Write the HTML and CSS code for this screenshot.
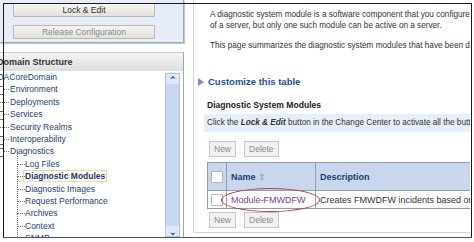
FILE: index.html
```html
<!DOCTYPE html>
<html>
  <head>
    <title>Diagnostic Modules</title>
    <link rel="stylesheet" href="styles.css">
  </head>
  <body>
    <div class="page">
      <div class="sidebar">
        <div class="change-center">
          <button type="button" class="cc-btn">Lock &amp; Edit</button>
          <button type="button" class="cc-btn disabled">Release Configuration</button>
        </div>
        <div class="domain">
          <div class="domain-head">Domain Structure</div>
          <div class="domain-body">
            <ul class="tree">
              <li class="root">OACoreDomain</li>
              <li class="lvl1"><span class="plus"></span>Environment</li>
              <li class="lvl1"><span class="leaf"></span>Deployments</li>
              <li class="lvl1"><span class="plus"></span>Services</li>
              <li class="lvl1"><span class="leaf"></span>Security Realms</li>
              <li class="lvl1"><span class="plus"></span>Interoperability</li>
              <li class="lvl1 open"><span class="minus"></span>Diagnostics</li>
              <li class="lvl2">Log Files</li>
              <li class="lvl2 current"><span>Diagnostic Modules</span></li>
              <li class="lvl2">Diagnostic Images</li>
              <li class="lvl2">Request Performance</li>
              <li class="lvl2">Archives</li>
              <li class="lvl2">Context</li>
              <li class="lvl2">SNMP</li>
            </ul>
            <div class="scrollbar">
              <div class="arrow">&#8963;</div>
              <div class="track"></div>
              <div class="arrow">&#8964;</div>
            </div>
          </div>
        </div>
      </div>
      <div class="main">
        <p class="intro">A diagnostic system module is a software component that you configure to collect diagnostic data for the whole<br>
          of a server, but only one such module can be active on a server.</p>
        <p class="intro">This page summarizes the diagnostic system modules that have been defined in the current domain.</p>
        <div class="customize"><span class="tri"></span>Customize this table</div>
        <h3>Diagnostic System Modules</h3>
        <div class="band">Click the <b><i>Lock &amp; Edit</i></b> button in the Change Center to activate all the buttons on this page.</div>
        <div class="actions">
          <span class="btn">New</span>
          <span class="btn">Delete</span>
        </div>
        <table class="grid">
          <tr>
            <th class="chk"><span class="box"></span></th>
            <th class="name">Name <span class="sort">&#8679;</span></th>
            <th>Description</th>
          </tr>
          <tr>
            <td class="chk"><span class="box"></span></td>
            <td class="name"><a href="#">Module-FMWDFW</a><span class="circle"></span></td>
            <td>Creates FMWDFW incidents based on uncaught exceptions and errors.</td>
          </tr>
        </table>
        <div class="actions bottom">
          <span class="btn">New</span>
          <span class="btn">Delete</span>
        </div>
      </div>
    </div>
    <div class="frame"></div>
  </body>
</html>
```

FILE: styles.css
```css
body {
  margin: 0;
  width: 474px;
  height: 242px;
  overflow: hidden;
  background: #fff;
  font-family: "Liberation Sans", Arial, sans-serif;
  font-size: 8.2px;
  color: #333;
  position: relative;
}

.page {
  display: flex;
  align-items: flex-start;
}

.sidebar {
  width: 184px;
  flex: none;
}

.change-center {
  height: 43px;
  background: #e6edf8;
  border-right: 1px solid #9aa6b6;
  border-bottom: 1px solid #9aa6b6;
  box-shadow: 1px 1px 1px #c4c9d0;
  box-sizing: border-box;
  display: flex;
  flex-direction: column;
  padding: 3px 0 0 13px;
  gap: 8px;
}

.cc-btn {
  width: 142px;
  height: 14px;
  padding: 0;
  font-family: "Liberation Sans", Arial, sans-serif;
  font-size: 8.5px;
  color: #333;
  background: linear-gradient(#f6f5f1, #e2e1da);
  border: 1px solid #b9b9b0;
  border-radius: 1px;
}

.cc-btn.disabled {
  color: #8a8a8a;
}

.domain {
  margin-top: 9px;
  height: 185px;
  border-right: 1px solid #9aa6b6;
  border-top: 1px solid #c4c9d0;
  box-sizing: border-box;
  display: flex;
  flex-direction: column;
}

.domain-head {
  height: 18px;
  line-height: 18px;
  background: linear-gradient(#f4f4f4, #dedede);
  font-weight: bold;
  font-size: 9px;
  color: #333;
  margin-left: -3px;
}

.domain-body {
  flex: 1;
  display: flex;
  overflow: hidden;
}

.tree {
  list-style: none;
  margin: 0;
  padding: 0;
  flex: 1;
  color: #233f6e;
  font-size: 8.5px;
}

.tree li {
  height: 12.4px;
  line-height: 12.4px;
  white-space: nowrap;
  position: relative;
}

.tree .root {
  margin-left: -3px;
}

.tree .lvl1 {
  padding-left: 10px;
}

.tree .lvl1 span {
  position: absolute;
  left: 0;
  top: 6px;
  width: 9px;
  border-top: 1px dotted #777;
}

.tree .lvl1 .plus::before,
.tree .lvl1 .minus::before {
  content: "";
  position: absolute;
  left: -3px;
  top: -4px;
  width: 5px;
  height: 7px;
  border: 1px solid #666;
  background: #fff;
}

.tree .lvl2 {
  padding-left: 25px;
}

.tree .lvl2::before {
  content: "";
  position: absolute;
  left: 17px;
  top: -6px;
  height: 12px;
  width: 7px;
  border-left: 1px dotted #777;
  border-bottom: 1px dotted #777;
}

.tree .current span {
  font-weight: bold;
  color: #1c3564;
  border: 1px solid #f0d99a;
  padding: 0 1px;
  margin-left: -2px;
}

.scrollbar {
  width: 13px;
  margin: 2px 3px 0 0;
  display: flex;
  flex-direction: column;
  background: #c7d7f3;
  border: 1px solid #b3c3de;
}

.scrollbar .arrow {
  height: 10px;
  line-height: 12px;
  text-align: center;
  font-size: 9px;
  font-weight: bold;
  color: #3a4e77;
  background: #dfe8f8;
}

.scrollbar .track {
  flex: 1;
}

.main {
  margin-left: 9px;
  width: 277px;
  height: 233px;
  border-left: 1px solid #d3d3d3;
  border-bottom: 1px solid #d3d3d3;
  box-sizing: border-box;
  overflow: hidden;
  padding: 9px 0 0 13px;
  white-space: nowrap;
}

.intro {
  margin: 0 0 9px 3px;
  line-height: 11px;
}

.customize {
  margin-top: 25px;
  margin-left: -9px;
  font-weight: bold;
  font-size: 9.5px;
  color: #1f4e8c;
  display: flex;
  align-items: center;
  gap: 4px;
}

.tri {
  width: 0;
  height: 0;
  border-top: 4px solid transparent;
  border-bottom: 4px solid transparent;
  border-left: 6px solid #7d93b6;
}

h3 {
  margin: 13px 0 4px;
  font-size: 8.6px;
  color: #222;
}

.band {
  background: #e6eef9;
  height: 18px;
  line-height: 18px;
  margin-left: -3px;
  padding-left: 3px;
}

.actions {
  display: flex;
  gap: 8px;
  padding: 9px 0 5px 2px;
}

.actions.bottom {
  padding-top: 3px;
}

.btn {
  border: 1px solid #c7c7c7;
  background: #f1f1f1;
  color: #8c8c8c;
  padding: 2px 4px;
  font-size: 8.5px;
}

.grid {
  border-collapse: collapse;
  table-layout: fixed;
  width: 320px;
  font-size: 9px;
}

.grid th,
.grid td {
  border: 1px solid #8f9bae;
  text-align: left;
  padding: 0 4px;
  white-space: nowrap;
  overflow: visible;
}

.grid th {
  height: 27px;
  background: #c9d7ed;
  color: #1c3b73;
  font-size: 9px;
}

.grid td {
  height: 17px;
}

.grid .chk {
  width: 12px;
  padding: 0 3px;
}

.grid .name {
  width: 80px;
  position: relative;
}

.box {
  display: inline-block;
  width: 10px;
  height: 10px;
  background: #fff;
  border: 1px solid #b8b8b8;
  vertical-align: middle;
}

.sort {
  color: #6e7fa0;
  font-weight: normal;
}

.grid a {
  color: #7b3b8d;
  text-decoration: none;
}

.circle {
  position: absolute;
  left: -6px;
  top: -3px;
  width: 97px;
  height: 22px;
  border: 1px solid #b04050;
  border-radius: 50%;
}

.frame {
  position: absolute;
  left: 3px;
  top: 3px;
  width: 467px;
  height: 233px;
  border: 1px solid #1a1a1a;
  border-bottom-color: #555;
  pointer-events: none;
}
```
